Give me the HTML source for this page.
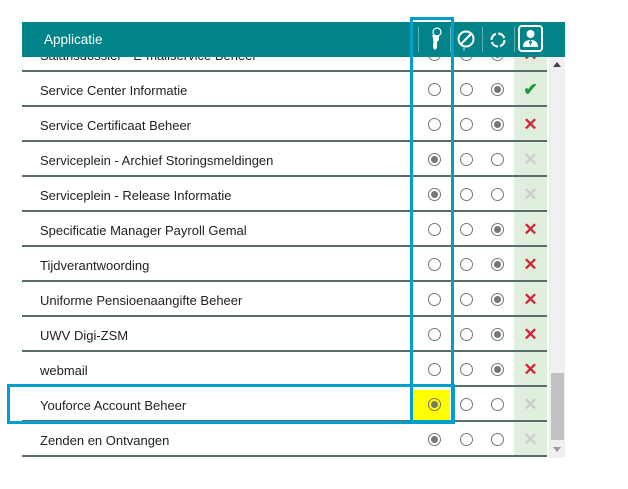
<!DOCTYPE html><html><head><style>
body{margin:0;width:628px;height:489px;background:#fff;position:relative;overflow:hidden;font-family:"Liberation Sans",sans-serif;}
.hdr{position:absolute;left:22px;top:22px;width:543px;height:35px;background:#008489;}
.hdr span{position:absolute;left:22px;top:10px;color:#fff;font-size:13.5px;}
.div{position:absolute;top:5px;width:1px;height:25px;background:#5fb3b6;}
.body{position:absolute;left:22px;top:57px;width:527px;height:400px;overflow:hidden;}
.w{position:absolute;left:0;top:1px;width:527px;height:420px;}
.row{position:absolute;left:0;width:525px;height:35px;border-bottom:2px solid #5a6b6b;box-sizing:border-box;}
.row .t{position:absolute;left:18px;top:11px;font-size:13px;color:#222;white-space:nowrap;}
.r{position:absolute;top:11px;width:11px;height:11px;border:1px solid #777;border-radius:50%;background:#fff;}
.r.c::after{content:"";position:absolute;left:2px;top:2px;width:7px;height:7px;border-radius:50%;background:#777;}
.g{position:absolute;left:492px;top:0;width:33px;height:33px;background:#e0eedd;text-align:center;line-height:35px;font-size:17px;font-weight:bold;}
.sb{position:absolute;left:549px;top:57px;width:16px;height:401px;background:#f0f0f0;}
</style></head><body>
<div class="hdr"><span>Applicatie</span>
<div class="div" style="left:396px"></div><div class="div" style="left:428px"></div><div class="div" style="left:460px"></div><div class="div" style="left:492px"></div>
<svg style="position:absolute;left:402px;top:4px" width="24" height="28" viewBox="0 0 24 28"><circle cx="13" cy="6" r="4" fill="none" stroke="#fff" stroke-width="1.2"/><path d="M8 9h7v5l-2 2v6l-2 2-2-2v-5l1-1-1-1v-3z" fill="#fff"/></svg>
<svg style="position:absolute;left:433px;top:6px" width="22" height="24" viewBox="0 0 22 24"><circle cx="11" cy="11" r="7.5" fill="none" stroke="#fff" stroke-width="2"/><path d="M6 16L16 6" stroke="#fff" stroke-width="2"/><path d="M9 19v4" stroke="#9bd" stroke-width="1.5"/></svg>
<svg style="position:absolute;left:466px;top:8px" width="20" height="20" viewBox="0 0 20 20"><circle cx="10" cy="10" r="6.5" fill="none" stroke="#fff" stroke-width="2.2" stroke-dasharray="8 2.2"/></svg>
<div style="position:absolute;left:496px;top:3px;width:25px;height:27px;border:2px solid #fff;border-radius:4px;box-sizing:border-box"><svg width="21" height="23" viewBox="0 0 21 23"><circle cx="10.5" cy="7" r="4" fill="#fff"/><path d="M3 20c0-5 3-7 7.5-7s7.5 2 7.5 7z" fill="#fff"/><path d="M10.5 13l-1.5 2 1.5 4 1.5-4z" fill="#008489"/></svg></div>
</div>
<div class="body"><div class="w">
<div class="row" style="top:-21px"><span class="t">Salarisdossier - E-mailservice Beheer</span><div class="r" style="left:406px"></div><div class="r" style="left:438px"></div><div class="r c" style="left:469px"></div><div class="g" style="color:#d0263a">✕</div></div>
<div class="row" style="top:14px"><span class="t">Service Center Informatie</span><div class="r" style="left:406px"></div><div class="r" style="left:438px"></div><div class="r c" style="left:469px"></div><div class="g" style="color:#1a9a3a">✔</div></div>
<div class="row" style="top:49px"><span class="t">Service Certificaat Beheer</span><div class="r" style="left:406px"></div><div class="r" style="left:438px"></div><div class="r c" style="left:469px"></div><div class="g" style="color:#d0263a">✕</div></div>
<div class="row" style="top:84px"><span class="t">Serviceplein - Archief Storingsmeldingen</span><div class="r c" style="left:406px"></div><div class="r" style="left:438px"></div><div class="r" style="left:469px"></div><div class="g" style="color:#ccc">✕</div></div>
<div class="row" style="top:119px"><span class="t">Serviceplein - Release Informatie</span><div class="r c" style="left:406px"></div><div class="r" style="left:438px"></div><div class="r" style="left:469px"></div><div class="g" style="color:#ccc">✕</div></div>
<div class="row" style="top:154px"><span class="t">Specificatie Manager Payroll Gemal</span><div class="r" style="left:406px"></div><div class="r" style="left:438px"></div><div class="r c" style="left:469px"></div><div class="g" style="color:#d0263a">✕</div></div>
<div class="row" style="top:189px"><span class="t">Tijdverantwoording</span><div class="r" style="left:406px"></div><div class="r" style="left:438px"></div><div class="r c" style="left:469px"></div><div class="g" style="color:#d0263a">✕</div></div>
<div class="row" style="top:224px"><span class="t">Uniforme Pensioenaangifte Beheer</span><div class="r" style="left:406px"></div><div class="r" style="left:438px"></div><div class="r c" style="left:469px"></div><div class="g" style="color:#d0263a">✕</div></div>
<div class="row" style="top:259px"><span class="t">UWV Digi-ZSM</span><div class="r" style="left:406px"></div><div class="r" style="left:438px"></div><div class="r c" style="left:469px"></div><div class="g" style="color:#d0263a">✕</div></div>
<div class="row" style="top:294px"><span class="t">webmail</span><div class="r" style="left:406px"></div><div class="r" style="left:438px"></div><div class="r c" style="left:469px"></div><div class="g" style="color:#d0263a">✕</div></div>
<div class="row" style="top:329px"><div style="position:absolute;left:391px;top:3px;width:37px;height:33px;background:#ffff00"></div><span class="t">Youforce Account Beheer</span><div class="r c" style="left:406px;border-color:#776;background:#ffff00"></div><div class="r" style="left:438px"></div><div class="r" style="left:469px"></div><div class="g" style="color:#ccc">✕</div></div>
<div class="row" style="top:364px"><span class="t">Zenden en Ontvangen</span><div class="r c" style="left:406px"></div><div class="r" style="left:438px"></div><div class="r" style="left:469px"></div><div class="g" style="color:#ccc">✕</div></div>
</div></div>
<div class="sb"><div style="position:absolute;left:4px;top:5px;border:4px solid transparent;border-bottom:5px solid #444;border-top:0"></div><div style="position:absolute;left:2px;top:316px;width:13px;height:67px;background:#c1c1c1"></div><div style="position:absolute;left:4px;top:390px;border:4px solid transparent;border-top:5px solid #999;border-bottom:0"></div></div>
<div style="position:absolute;left:410px;top:17px;width:44px;height:406px;border:3px solid #009fcc;box-sizing:border-box"></div>
<div style="position:absolute;left:7px;top:384px;width:448px;height:40px;border:3px solid #009fcc;box-sizing:border-box"></div>
</body></html>
